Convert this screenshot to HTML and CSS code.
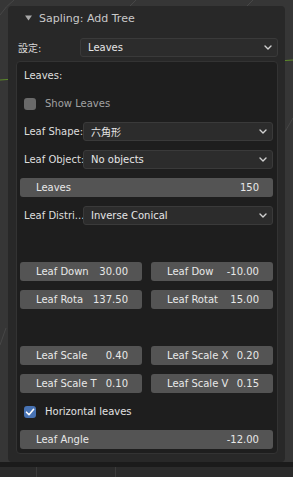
FILE: index.html
```html
<!DOCTYPE html>
<html>
<head>
<meta charset="utf-8">
<link rel="stylesheet" href="styles.css">
</head>
<body>
<div class="viewport">
  <svg class="grid" width="293" height="462" viewBox="0 0 293 462">
    <path d="M0 15 Q6 6 14 0" class="gl"/>
    <path d="M130 6 L136 0" class="gl"/>
    <path d="M246 7 L253 0" class="gl"/>
    <path d="M0 345 L6 328" class="gl"/>
    <path d="M286 130 L293 118" class="gl"/>
    <path d="M0 80 L293 60" class="green"/>
  </svg>
  <div class="panel">
    <div class="panel-header">
      <svg class="tri" width="7" height="6" viewBox="0 0 7 6"><path d="M0 0.5 H7 L3.5 5.5 Z"/></svg>
      <span>Sapling: Add Tree</span>
    </div>
    <div class="top-row">
      <span class="top-label">設定:</span>
      <div class="dropdown"><span>Leaves</span><svg class="chev" width="8" height="5" viewBox="0 0 8 5"><path d="M1 1 L4 4 L7 1"/></svg></div>
    </div>
    <div class="box">
      <div class="row"><span class="label">Leaves:</span></div>
      <div class="row check-row"><span class="cb"></span><span class="dim">Show Leaves</span></div>
      <div class="row"><span class="label">Leaf Shape:</span><div class="dropdown"><span>六角形</span><svg class="chev" width="8" height="5" viewBox="0 0 8 5"><path d="M1 1 L4 4 L7 1"/></svg></div></div>
      <div class="row"><span class="label">Leaf Object:</span><div class="dropdown"><span>No objects</span><svg class="chev" width="8" height="5" viewBox="0 0 8 5"><path d="M1 1 L4 4 L7 1"/></svg></div></div>
      <div class="num"><span>Leaves</span><span>150</span></div>
      <div class="row"><span class="label">Leaf Distri...</span><div class="dropdown"><span>Inverse Conical</span><svg class="chev" width="8" height="5" viewBox="0 0 8 5"><path d="M1 1 L4 4 L7 1"/></svg></div></div>
      <div class="spacer"></div>
      <div class="pair">
        <div class="num"><span>Leaf Down</span><span>30.00</span></div>
        <div class="num"><span>Leaf Dow</span><span>-10.00</span></div>
      </div>
      <div class="pair">
        <div class="num"><span>Leaf Rota</span><span>137.50</span></div>
        <div class="num"><span>Leaf Rotat</span><span>15.00</span></div>
      </div>
      <div class="spacer"></div>
      <div class="pair">
        <div class="num"><span>Leaf Scale</span><span>0.40</span></div>
        <div class="num"><span>Leaf Scale X</span><span>0.20</span></div>
      </div>
      <div class="pair">
        <div class="num"><span>Leaf Scale T</span><span>0.10</span></div>
        <div class="num"><span>Leaf Scale V</span><span>0.15</span></div>
      </div>
      <div class="row check-row"><span class="cb on"><svg width="12" height="12" viewBox="0 0 12 12"><path d="M2.5 6.2 L5 8.7 L9.6 3.3"/></svg></span><span>Horizontal leaves</span></div>
      <div class="num"><span>Leaf Angle</span><span>-12.00</span></div>
    </div>
  </div>
</div>
<div class="sep"></div>
<div class="timeline">
  <div class="tl-a"></div>
  <div class="tl-b"></div>
  <div class="tl-c"></div>
</div>
</body>
</html>
```

FILE: styles.css
```css
html, body {
  margin: 0;
  padding: 0;
}

body {
  width: 293px;
  height: 477px;
  overflow: hidden;
  background: #2b2b2b;
  font-family: "DejaVu Sans", "Noto Sans CJK JP", sans-serif;
  font-size: 10px;
  color: #e2e2e2;
}

.viewport {
  position: relative;
  height: 462px;
  box-sizing: border-box;
  padding: 6px 8px 0 8px;
  background: #363636;
  overflow: hidden;
}

.grid {
  position: absolute;
  left: 0;
  top: 0;
}

.grid .gl {
  fill: none;
  stroke: #474747;
  stroke-width: 1;
}

.grid .green {
  fill: none;
  stroke: #5d8a2a;
  stroke-width: 1;
}

.panel {
  position: relative;
  height: 456px;
  box-sizing: border-box;
  padding: 0 7px 0 8px;
  background: #282828;
  border-radius: 4px;
}

.panel-header {
  height: 24px;
  display: flex;
  align-items: center;
  gap: 7px;
  padding-left: 9px;
  font-size: 11px;
  color: #c9c9c9;
}

.tri path {
  fill: #a8a8a8;
}

.top-row {
  display: flex;
  align-items: center;
  height: 19px;
  margin-top: 8px;
  margin-bottom: 4px;
}

.top-label {
  width: 64px;
  flex: none;
  padding-left: 2px;
  box-sizing: border-box;
  color: #d8d8d8;
}

.dropdown {
  flex: 1;
  height: 19px;
  box-sizing: border-box;
  display: flex;
  align-items: center;
  justify-content: space-between;
  padding: 0 5px 0 7px;
  background: #2c2c2c;
  border: 1px solid #3a3a3a;
  border-radius: 3px;
  color: #e6e6e6;
}

.chev path {
  fill: none;
  stroke: #d0d0d0;
  stroke-width: 1.4;
  stroke-linecap: round;
  stroke-linejoin: round;
}

.box {
  display: flex;
  flex-direction: column;
  gap: 9px;
  padding: 4px 4px 4px 3px;
  background: #1e1e1e;
  border: 1px solid #333333;
  border-radius: 4px;
}

.row {
  height: 19px;
  display: flex;
  align-items: center;
}

.label {
  width: 63px;
  flex: none;
  padding-left: 4px;
  box-sizing: border-box;
  white-space: nowrap;
  color: #dedede;
}

.check-row {
  padding-left: 4px;
  gap: 9px;
}

.cb {
  width: 12px;
  height: 12px;
  border-radius: 3px;
  background: #6a6a6a;
  display: flex;
}

.cb.on {
  background: #4772b3;
}

.cb svg path {
  fill: none;
  stroke: #ffffff;
  stroke-width: 1.6;
  stroke-linecap: round;
  stroke-linejoin: round;
}

.dim {
  color: #a2a2a2;
}

.spacer {
  height: 19px;
}

.num {
  height: 19px;
  box-sizing: border-box;
  display: flex;
  align-items: center;
  justify-content: space-between;
  padding: 0 14px 0 16px;
  background: #545454;
  border-radius: 3px;
  color: #e8e8e8;
  white-space: nowrap;
}

.pair {
  display: flex;
  gap: 9px;
}

.pair .num {
  flex: 1;
}

.sep {
  height: 5px;
  background: #1b1b1b;
}

.timeline {
  height: 10px;
  display: flex;
  background: #2b2b2b;
}

.tl-a {
  width: 36px;
  border-right: 1px solid #3c3c3c;
}

.tl-b {
  width: 78px;
  border-right: 1px solid #3c3c3c;
}

.tl-c {
  flex: 1;
}
```
